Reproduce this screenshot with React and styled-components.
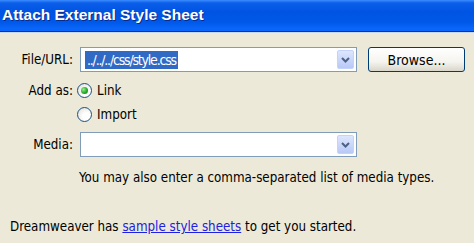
import React from 'react';
import styled, { createGlobalStyle } from 'styled-components';

const GlobalStyle = createGlobalStyle`
  html, body {
    margin: 0;
    padding: 0;
    background: #ece9d8;
  }
`;

const Dialog = styled.div`
  width: 474px;
  height: 243px;
  overflow: hidden;
  background: #ece9d8;
  font-family: 'DejaVu Sans Condensed', 'Liberation Sans', sans-serif;
  font-size: 13.25px;
  color: #000;
`;

const TitleBar = styled.div`
  height: 30px;
  display: flex;
  align-items: center;
  padding: 0 0 1px 2px;
  background: linear-gradient(
    to bottom,
    #3d8cff 0px,
    #0a5ee8 3px,
    #0054e3 12px,
    #0058e8 22px,
    #0a66fa 29px,
    #0a66fa 30px
  );
  border-bottom: 1px solid #0034a8;
  box-shadow: 0 1px 0 #c9d7ef;
  color: #fff;
  font-family: 'Liberation Sans', Arial, sans-serif;
  font-weight: bold;
  font-size: 15.5px;
  text-shadow: 1px 1px 0 #0a2a8a;
`;

const Body = styled.div`
  padding: 15px 0 0 0;
`;

const Row = styled.div`
  display: flex;
  align-items: center;
  height: ${(p) => p.h || 25}px;
  margin-top: ${(p) => p.mt || 0}px;
`;

const Label = styled.div`
  width: 73px;
  margin-right: ${(p) => p.gap || 7}px;
  text-align: right;
  white-space: nowrap;
`;

const Combo = styled.div`
  width: 277px;
  height: 25px;
  box-sizing: border-box;
  border: 1px solid #7f9db9;
  background: #fff;
  display: flex;
  align-items: center;
  padding: 2px;
`;

const ComboText = styled.div`
  flex: 1;
  height: 100%;
  display: flex;
  align-items: center;
`;

const Selected = styled.span`
  background: #316ac5;
  color: #fff;
  margin-left: 2px;
  padding: 0 2px;
  font-size: 14px;
  letter-spacing: -1.2px;
  line-height: 18px;
`;

const DropButton = styled.div`
  width: 17px;
  height: 100%;
  box-sizing: border-box;
  border: 1px solid #c3d3fd;
  border-radius: 2px;
  background: linear-gradient(to bottom, #dde6fd, #b7c9f7);
  display: flex;
  align-items: center;
  justify-content: center;
`;

const Button = styled.div`
  width: 97px;
  height: 25px;
  margin-left: 11px;
  box-sizing: border-box;
  border: 1px solid #003c74;
  border-radius: 3px;
  background: linear-gradient(to bottom, #ffffff, #f5f4ee 60%, #d9d6ca);
  display: flex;
  align-items: center;
  justify-content: center;
  font-size: 14px;
`;

const Radio = styled.div`
  width: 15px;
  height: 15px;
  margin-right: 5px;
  box-sizing: border-box;
  border-radius: 50%;
  border: 1px solid #1c5180;
  background: radial-gradient(circle at 65% 65%, #ffffff 30%, #dcdad0 100%);
  display: flex;
  align-items: center;
  justify-content: center;
`;

const Dot = styled.div`
  width: 7px;
  height: 7px;
  border-radius: 50%;
  background: radial-gradient(circle at 35% 35%, #8ef08e, #21a121 60%, #1a8a1a);
`;

const Spacer = styled.div`
  height: ${(p) => p.h}px;
`;

const Note = styled.div`
  padding-left: 79px;
  margin-top: 12px;
  height: 18px;
  line-height: 18px;
`;

const Footer = styled.div`
  padding-left: 10px;
  margin-top: 31px;
  line-height: 18px;
`;

const Link = styled.a`
  color: #2020e0;
  text-decoration: underline;
`;

const Chevron = () => (
  <svg width="9" height="6" viewBox="0 0 9 6">
    <path d="M1 1 L4.5 4.5 L8 1" fill="none" stroke="#4d6185" strokeWidth="2" />
  </svg>
);

const Select = ({ value }) => (
  <Combo>
    <ComboText>{value && <Selected>{value}</Selected>}</ComboText>
    <DropButton>
      <Chevron />
    </DropButton>
  </Combo>
);

const Option = ({ label, checked, children }) => (
  <Row h={24}>
    <Label gap={4}>{label}</Label>
    <Radio>{checked && <Dot />}</Radio>
    {children}
  </Row>
);

export default function App() {
  return (
    <Dialog>
      <GlobalStyle />
      <TitleBar>Attach External Style Sheet</TitleBar>
      <Body>
        <Row>
          <Label>File/URL:</Label>
          <Select value="../../../css/style.css" />
          <Button>Browse...</Button>
        </Row>
        <Spacer h={6} />
        <Option label="Add as:" checked>
          Link
        </Option>
        <Option>Import</Option>
        <Row mt={6}>
          <Label>Media:</Label>
          <Select />
        </Row>
        <Note>You may also enter a comma-separated list of media types.</Note>
        <Footer>
          Dreamweaver has <Link href="#">sample style sheets</Link> to get you
          started.
        </Footer>
      </Body>
    </Dialog>
  );
}
